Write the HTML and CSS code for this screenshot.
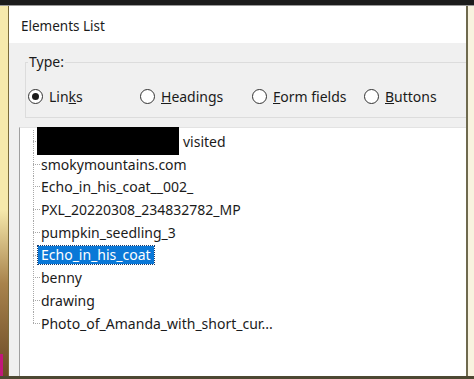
FILE: index.html
```html
<!DOCTYPE html>
<html lang="en">
<head>
    <meta charset="UTF-8">
    <title>Elements List</title>
    <link rel="stylesheet" href="styles.css">
</head>
<body>
    <div class="screen">
        <div class="topbar"></div>
        <div class="middle">
            <div class="desk-left"><span class="pink"></span></div>

            <div class="dialog">
                <div class="titlebar">Elements List</div>

                <div class="panel">
                    <fieldset class="group">
                        <legend>Type:</legend>
                        <div class="radios">
                            <label class="radio checked"><span class="dot"></span><span>Lin<u>k</u>s</span></label>
                            <label class="radio"><span class="dot"></span><span><u>H</u>eadings</span></label>
                            <label class="radio"><span class="dot"></span><span><u>F</u>orm fields</span></label>
                            <label class="radio"><span class="dot"></span><span><u>B</u>uttons</span></label>
                        </div>
                    </fieldset>

                    <div class="listbox">
                        <ul class="tree">
                            <li><span class="redacted"></span>visited</li>
                            <li>smokymountains.com</li>
                            <li>Echo_in_his_coat__002_</li>
                            <li>PXL_20220308_234832782_MP</li>
                            <li>pumpkin_seedling_3</li>
                            <li><span class="selected">Echo_in_his_coat</span></li>
                            <li>benny</li>
                            <li>drawing</li>
                            <li>Photo_of_Amanda_with_short_cur...</li>
                        </ul>
                    </div>
                </div>
            </div>

            <div class="desk-right"></div>
        </div>
        <div class="bottombar"></div>
    </div>
</body>
</html>
```

FILE: styles.css
```css
body {
    margin: 0;
    font-family: "Noto Sans", "Open Sans", sans-serif;
    color: #1b1b1b;
    background: #f6f0d8;
}
.screen {
    width: 474px;
    height: 379px;
    display: flex;
    flex-direction: column;
    overflow: hidden;
}
.topbar {
    height: 5px;
    background: #1c1c1c;
    border-bottom: 1px solid #9a9a9a;
}
.bottombar {
    height: 3px;
    background: #4d4832;
}
.middle {
    flex: 1;
    display: flex;
    min-height: 0;
}
.desk-left {
    width: 8px;
    border-right: 1px solid #7a6a3a;
    background: linear-gradient(to bottom, #f6e9ac 0 55%, #a8834c 75%, #6b4a26);
    display: flex;
    flex-direction: column;
    justify-content: flex-end;
}
.pink {
    width: 3px;
    height: 22px;
    background: #c2187a;
}
.desk-right {
    width: 6px;
    border-left: 2px solid #6f6a4e;
    background: #f8f3df;
}
.dialog {
    flex: 1;
    display: flex;
    flex-direction: column;
    overflow: hidden;
    background: #f0f0f0;
}
.titlebar {
    height: 37px;
    background: white;
    padding-left: 12px;
    font-size: 13.5px;
    line-height: 41px;
}
.panel {
    flex: 1;
    padding: 10px 0 0 10px;
    display: flex;
    flex-direction: column;
}
.group {
    margin: 0 -12px 9px 6px;
    padding: 15px 2px 11px 2px;
    border: 1px solid #dcdcdc;
    font-size: 14px;
}
.group legend {
    padding: 0 1px;
    line-height: 18px;
}
.radios {
    display: flex;
    height: 20px;
    align-items: center;
}
.radio {
    width: 112px;
    display: flex;
    align-items: center;
    gap: 6px;
    flex-shrink: 0;
}
.dot {
    width: 13px;
    height: 13px;
    border: 1px solid #333;
    border-radius: 50%;
    background: white;
    display: flex;
    align-items: center;
    justify-content: center;
}
.checked .dot::after {
    content: "";
    width: 7px;
    height: 7px;
    border-radius: 50%;
    background: #1b1b1b;
}
.listbox {
    flex: 1;
    background: white;
    border-top: 1px solid #e3e3e3;
    border-left: 1px solid #a0a0a0;
    margin-right: -10px;
    padding: 2px 0 0 13px;
}
.tree {
    list-style: none;
    margin: 0;
    padding: 0;
    font-size: 14px;
}
.tree li {
    height: 22.75px;
    display: flex;
    align-items: center;
    padding-left: 8px;
    white-space: nowrap;
    background:
        repeating-linear-gradient(to bottom, #a8a8a8 0 1px, transparent 1px 2px) 0 0 / 1px 100% no-repeat,
        repeating-linear-gradient(to right, #a8a8a8 0 1px, transparent 1px 2px) 0 50% / 7px 1px no-repeat;
}
.tree li:last-child {
    background:
        repeating-linear-gradient(to bottom, #a8a8a8 0 1px, transparent 1px 2px) 0 0 / 1px 50% no-repeat,
        repeating-linear-gradient(to right, #a8a8a8 0 1px, transparent 1px 2px) 0 50% / 7px 1px no-repeat;
}
.redacted {
    display: inline-block;
    width: 142px;
    height: 28px;
    margin: 0 4px 0 -4px;
    background: black;
}
.selected {
    background: #0a78d7;
    color: white;
    padding: 0 3px;
    margin-left: -3px;
    line-height: 18px;
    outline: 1px dotted #1b3a6a;
}
```
